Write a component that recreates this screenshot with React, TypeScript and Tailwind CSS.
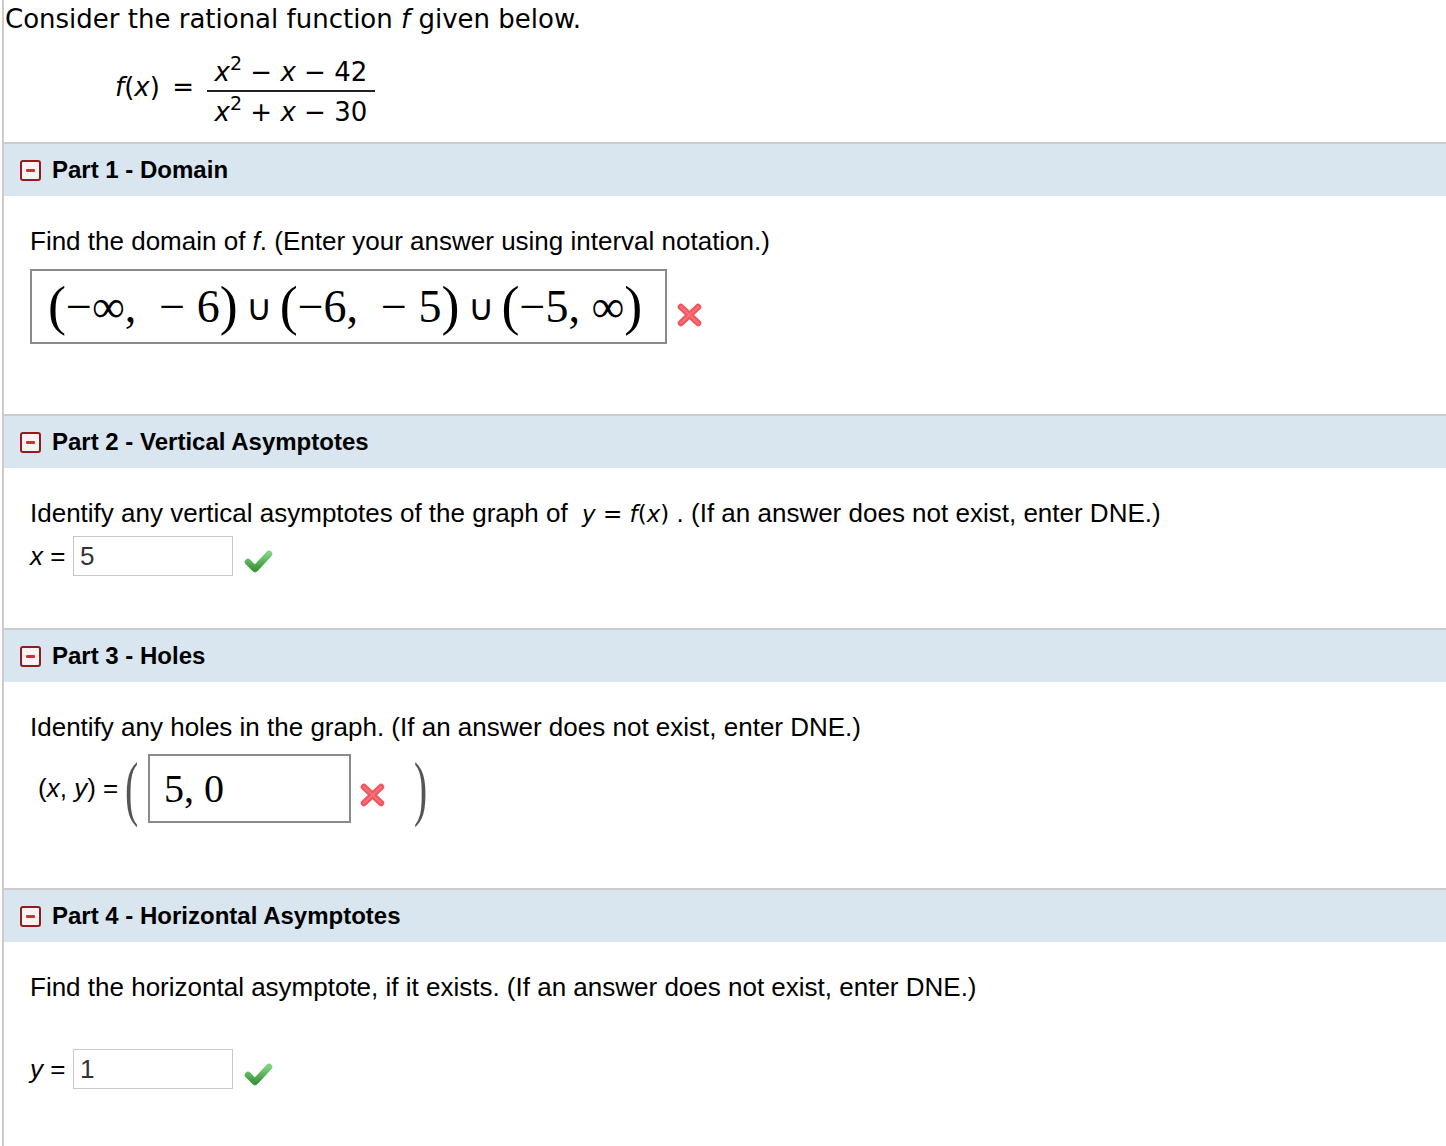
import React from 'react';

// Pagina esercizio: funzione razionale con quattro parti

const sans = "font-['Liberation_Sans',Arial,sans-serif]";
const verdana = "font-['DejaVu_Sans',Verdana,sans-serif]";
const serif = "font-['Liberation_Serif','Times_New_Roman',serif]";

const MinusIcon: React.FC = () => (
    <div className="w-[21px] h-[21px] rounded-[3px] border-2 border-[#8e1d1d] bg-[#fbf3f3] flex items-center justify-center shrink-0">
        <div className="w-[9px] h-[3px] bg-[#c8333a] rounded-[1px]" />
    </div>
);

const WrongMark: React.FC = () => (
    <svg width="27" height="26" viewBox="0 0 27 26" className="shrink-0">
        <g stroke="#f2555e" strokeWidth="6.5" strokeLinecap="round">
            <line x1="5" y1="5" x2="22" y2="21" />
            <line x1="22" y1="5" x2="5" y2="21" />
        </g>
        <g stroke="#f7868c" strokeWidth="2" strokeLinecap="round" opacity="0.6">
            <line x1="5" y1="5" x2="22" y2="21" />
            <line x1="22" y1="5" x2="5" y2="21" />
        </g>
    </svg>
);

const CorrectMark: React.FC = () => (
    <svg width="31" height="25" viewBox="0 0 31 25" className="shrink-0">
        <defs>
            <linearGradient id="chk" x1="0" y1="0" x2="0" y2="1">
                <stop offset="0" stopColor="#7fd07f" />
                <stop offset="1" stopColor="#3c963c" />
            </linearGradient>
        </defs>
        <path
            d="M5 13 L12 20 L26 5"
            fill="none"
            stroke="url(#chk)"
            strokeWidth="6.5"
            strokeLinecap="round"
            strokeLinejoin="round"
        />
    </svg>
);

const PartHeader: React.FC<{ title: string }> = ({ title }) => (
    <div className="h-[54px] border-t-2 border-[#cccccc] bg-[#d9e5ef] flex items-center pl-[16px] gap-[11px]">
        <MinusIcon />
        <span className={`${sans} font-bold text-[24px] text-black leading-none`}>{title}</span>
    </div>
);

const Prompt: React.FC<{ children: React.ReactNode }> = ({ children }) => (
    <div className={`${sans} text-[26px] leading-[28px] text-black whitespace-pre`}>{children}</div>
);

const SmallInput: React.FC<{ value: string }> = ({ value }) => (
    <div className={`w-[160px] h-[40px] border border-[#c8c8c8] bg-white flex items-center pl-[6px] ${sans} text-[26px] text-[#333]`}>
        {value}
    </div>
);

const Sq: React.FC = () => <sup className="text-[19px] relative -top-[11px] align-baseline">2</sup>;

const BigParen: React.FC<{ ch: string }> = ({ ch }) => (
    <span className="text-[54px] leading-none relative -top-[1px]">{ch}</span>
);

const Cup: React.FC = () => (
    <span className={`${verdana} text-[36px] font-light mx-[8px] relative top-[1px]`}>∪</span>
);

export default function App() {
    return (
        <div className="ml-[2px] border-l-2 border-[#cccccc] min-h-screen bg-white text-black">
            {/* intestazione */}
            <div className={`${verdana} text-[26px] leading-[38px] pl-[1px]`}>
                Consider the rational function <i>f</i> given below.
            </div>
            <div className={`h-[104px] flex pl-[111px] ${verdana} text-[26px]`}>
                <div className="mt-[31px] h-[36px] leading-[36px] whitespace-pre">
                    <i>f</i>(<i>x</i>) <span className="ml-[4px]">=</span>
                </div>
                <div className="ml-[13px] flex flex-col items-center">
                    <div className="mt-[16px] h-[36px] leading-[36px] px-[3px] whitespace-pre">
                        <i>x</i>
                        <Sq /> − <i>x</i> − 42
                    </div>
                    <div className="h-[2px] w-[168px] bg-[#222]" />
                    <div className="h-[40px] leading-[40px] px-[3px] whitespace-pre">
                        <i>x</i>
                        <Sq /> + <i>x</i> − 30
                    </div>
                </div>
            </div>

            {/* Part 1 */}
            <PartHeader title="Part 1 - Domain" />
            <div className="h-[218px] pl-[26px] pt-[31px]">
                <Prompt>
                    Find the domain of <i>f</i>. (Enter your answer using interval notation.)
                </Prompt>
                <div className="mt-[14px] flex items-start">
                    <div className={`w-[637px] h-[75px] border-2 border-[#8a8a8a] flex items-center pl-[16px] ${serif} text-[46px] text-black whitespace-pre`}>
                        <BigParen ch="(" />
                        <span>−∞,  − 6</span>
                        <BigParen ch=")" />
                        <Cup />
                        <BigParen ch="(" />
                        <span>−6,  − 5</span>
                        <BigParen ch=")" />
                        <Cup />
                        <BigParen ch="(" />
                        <span>−5, ∞</span>
                        <BigParen ch=")" />
                    </div>
                    <div className="ml-[9px] mt-[33px]">
                        <WrongMark />
                    </div>
                </div>
            </div>

            {/* Part 2 */}
            <PartHeader title="Part 2 - Vertical Asymptotes" />
            <div className="h-[160px] pl-[26px] pt-[31px]">
                <Prompt>
                    Identify any vertical asymptotes of the graph of{'  '}
                    <span className={`${verdana} text-[23px]`}>
                        <i>y</i> = <i>f</i>(<i>x</i>)
                    </span>{' '}
                    . (If an answer does not exist, enter DNE.)
                </Prompt>
                <div className="mt-[8px] flex items-start">
                    <div className={`${sans} text-[26px] h-[40px] leading-[40px] w-[43px] whitespace-pre`}>
                        <i>x</i> =
                    </div>
                    <SmallInput value="5" />
                    <div className="ml-[10px] mt-[13px]">
                        <CorrectMark />
                    </div>
                </div>
            </div>

            {/* Part 3 */}
            <PartHeader title="Part 3 - Holes" />
            <div className="h-[206px] pl-[26px] pt-[31px]">
                <Prompt>Identify any holes in the graph. (If an answer does not exist, enter DNE.)</Prompt>
                <div className="mt-[13px] flex items-start">
                    <div className={`${sans} text-[26px] h-[69px] leading-[69px] pl-[8px] w-[95px] whitespace-pre`}>
                        (<i>x</i>, <i>y</i>) =
                    </div>
                    <div className={`${serif} text-[72px] leading-[69px] h-[69px] text-[#555] font-light scale-x-[0.55] origin-left w-[23px]`}>
                        (
                    </div>
                    <div className={`w-[203px] h-[69px] border-2 border-[#8a8a8a] flex items-center pl-[14px] ${serif} text-[40px] text-black whitespace-pre`}>
                        5, 0
                    </div>
                    <div className="ml-[8px] mt-[28px]">
                        <WrongMark />
                    </div>
                    <div className={`ml-[28px] ${serif} text-[72px] leading-[69px] h-[69px] text-[#555] font-light scale-x-[0.55] origin-left`}>
                        )
                    </div>
                </div>
            </div>

            {/* Part 4 */}
            <PartHeader title="Part 4 - Horizontal Asymptotes" />
            <div className="h-[204px] pl-[26px] pt-[31px]">
                <Prompt>Find the horizontal asymptote, if it exists. (If an answer does not exist, enter DNE.)</Prompt>
                <div className="mt-[48px] flex items-start">
                    <div className={`${sans} text-[26px] h-[40px] leading-[40px] w-[43px] whitespace-pre`}>
                        <i>y</i> =
                    </div>
                    <SmallInput value="1" />
                    <div className="ml-[10px] mt-[13px]">
                        <CorrectMark />
                    </div>
                </div>
            </div>
        </div>
    );
}
